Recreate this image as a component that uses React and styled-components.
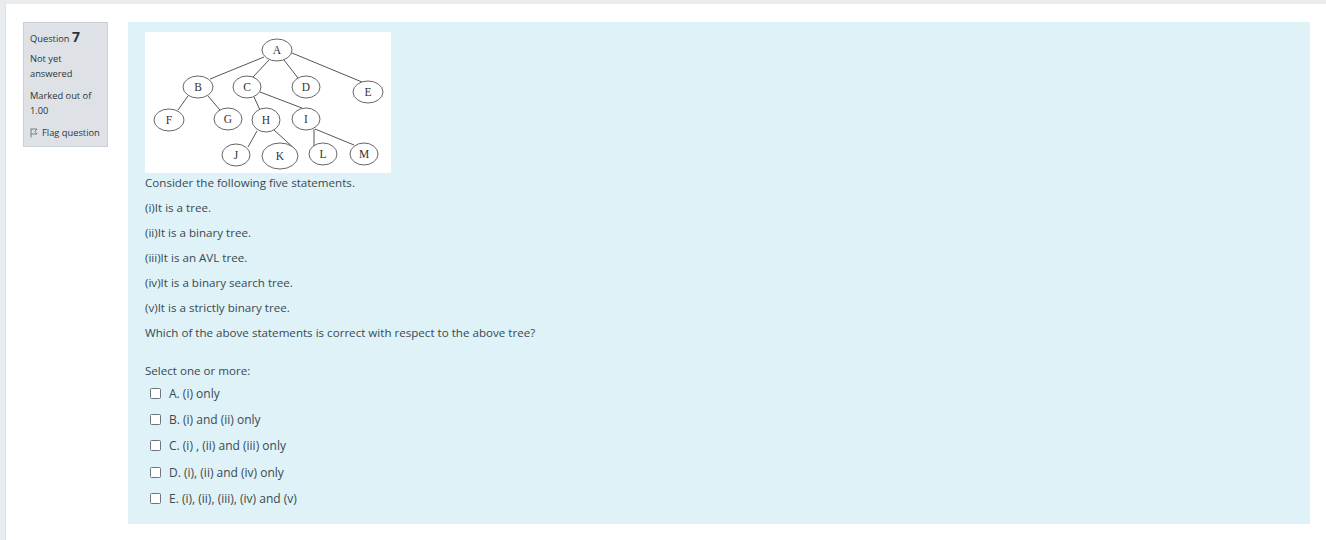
import React from "react";
import styled, { createGlobalStyle } from "styled-components";

const Global = createGlobalStyle`
  html, body { margin: 0; padding: 0; }
  body {
    background: #e9ecef;
    font-family: "Open Sans", "Noto Sans", sans-serif;
    width: 1326px;
    height: 540px;
    overflow: hidden;
  }
`;

const Page = styled.div`
  margin: 4px 0 0 5px;
  height: 536px;
  background: #ffffff;
  border-left: 1px solid #dee2e6;
  box-sizing: border-box;
  padding: 18px 16px 0 17px;
  display: flex;
  align-items: flex-start;
  gap: 20px;
`;

const Info = styled.div`
  width: 85px;
  box-sizing: border-box;
  background: #dee2e6;
  border: 1px solid #cad0d7;
  padding: 6px 6px 6px 6px;
  color: #2d3338;
  font-size: 9.3px;
  line-height: 15px;
`;

const QNo = styled.h3`
  margin: 0 0 5px 0;
  font-weight: 400;
  font-size: 9.3px;
  line-height: 15px;
  b {
    font-size: 14px;
    font-weight: 700;
  }
`;

const InfoLine = styled.div`
  margin-bottom: 7px;
`;

const Flag = styled.div`
  display: flex;
  align-items: center;
  gap: 4px;
  margin-top: 2px;
`;

const Formulation = styled.div`
  flex: 1;
  height: 502px;
  box-sizing: border-box;
  background: #def2f8;
  padding: 10px 17px;
  color: #3b4950;
  font-size: 11.6px;
`;

const TreeBox = styled.div`
  width: 246px;
  height: 141px;
  background: #ffffff;
`;

const Para = styled.p`
  margin: 0;
  height: 25px;
  line-height: 20px;
`;

const Prompt = styled.div`
  margin-top: 13px;
  line-height: 20px;
  height: 19px;
`;

const Options = styled.div`
  display: flex;
  flex-direction: column;
  padding-left: 5px;
`;

const Option = styled.label`
  display: flex;
  align-items: center;
  height: 26.3px;
  gap: 8px;
  font-size: 12px;
`;

const Box = styled.span`
  width: 9px;
  height: 9px;
  border: 1px solid #6c757d;
  border-radius: 1.5px;
  background: #fff;
  flex: none;
`;

const nodes = [
  ["A", 132, 18, 15, 11],
  ["B", 53, 55, 15, 11],
  ["C", 102, 55, 14, 11],
  ["D", 161, 55, 14, 11],
  ["E", 223, 60, 15, 11],
  ["F", 24, 88, 15, 11],
  ["G", 83, 87, 14, 11],
  ["H", 121, 88, 14, 12],
  ["I", 161, 87, 14, 11],
  ["J", 91, 123, 14, 11],
  ["K", 135, 124, 18, 13],
  ["L", 178, 122, 14, 11],
  ["M", 219, 122, 14, 11],
];

const edges = [
  [119, 25, 65, 47],
  [124, 28, 108, 45],
  [139, 28, 153, 46],
  [147, 21, 217, 50],
  [43, 64, 33, 78],
  [63, 64, 75, 78],
  [109, 65, 115, 78],
  [115, 60, 157, 76],
  [112, 99, 103, 115],
  [129, 98, 151, 118],
  [169, 97, 169, 114],
  [170, 97, 209, 113],
];

function Tree() {
  return (
    <svg width="246" height="141" viewBox="0 0 246 141">
      {edges.map(([x1, y1, x2, y2], i) => (
        <line key={i} x1={x1} y1={y1} x2={x2} y2={y2} stroke="#555" strokeWidth="1" />
      ))}
      {nodes.map(([t, cx, cy, rx, ry]) => (
        <g key={t}>
          <ellipse cx={cx} cy={cy} rx={rx} ry={ry} fill="#fff" stroke="#666" strokeWidth="1" />
          <text
            x={cx}
            y={cy + 4}
            textAnchor="middle"
            fontFamily="'Liberation Serif', serif"
            fontSize="11.5"
            fill="#333"
          >
            {t}
          </text>
        </g>
      ))}
    </svg>
  );
}

const FlagIcon = () => (
  <svg width="8" height="10" viewBox="0 0 8 10">
    <path d="M1 0.5 V9.5 M1 1 H7 L5 3.5 L7 6 H1" fill="none" stroke="#6c757d" strokeWidth="0.9" />
  </svg>
);

const statements = [
  "Consider the following five statements.",
  "(i)It is a tree.",
  "(ii)It is a binary tree.",
  "(iii)It is an AVL tree.",
  "(iv)It is a binary search tree.",
  "(v)It is a strictly binary tree.",
  "Which of the above statements is correct with respect to the above tree?",
];

const options = [
  "A. (i) only",
  "B. (i) and (ii) only",
  "C. (i) , (ii) and (iii) only",
  "D. (i), (ii) and (iv) only",
  "E. (i), (ii), (iii), (iv) and (v)",
];

export default function App() {
  return (
    <>
      <Global />
      <Page>
        <Info>
          <QNo>
            Question <b>7</b>
          </QNo>
          <InfoLine>Not yet answered</InfoLine>
          <InfoLine>Marked out of 1.00</InfoLine>
          <Flag>
            <FlagIcon />
            <span>Flag question</span>
          </Flag>
        </Info>
        <Formulation>
          <TreeBox>
            <Tree />
          </TreeBox>
          {statements.map((s) => (
            <Para key={s}>{s}</Para>
          ))}
          <Prompt>Select one or more:</Prompt>
          <Options>
            {options.map((o) => (
              <Option key={o}>
                <Box />
                <span>{o}</span>
              </Option>
            ))}
          </Options>
        </Formulation>
      </Page>
    </>
  );
}
